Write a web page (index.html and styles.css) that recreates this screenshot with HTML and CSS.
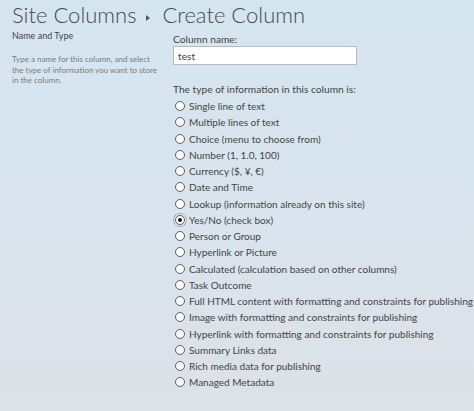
FILE: index.html
```html
<!DOCTYPE html>
<html lang="en">
<head>
<meta charset="utf-8">
<title>Site Columns - Create Column</title>
<link rel="stylesheet" href="styles.css">
</head>
<body>
<div class="page">
  <h1 class="title">Site Columns <span class="crumb-sep"></span> Create Column</h1>
  <div class="section">
    <div class="section-info">
      <div class="section-name">Name and Type</div>
      <p class="section-desc">Type a name for this column, and select the type of information you want to store in the column.</p>
    </div>
    <div class="section-fields">
      <label class="field-label" for="colname">Column name:</label>
      <input class="text-input" id="colname" type="text" value="test">
      <div class="type-label">The type of information in this column is:</div>
      <ul class="type-list">
        <li class="type-item"><span class="radio"></span>Single line of text</li>
        <li class="type-item"><span class="radio"></span>Multiple lines of text</li>
        <li class="type-item"><span class="radio"></span>Choice (menu to choose from)</li>
        <li class="type-item"><span class="radio"></span>Number (1, 1.0, 100)</li>
        <li class="type-item"><span class="radio"></span>Currency ($, ¥, €)</li>
        <li class="type-item"><span class="radio"></span>Date and Time</li>
        <li class="type-item"><span class="radio"></span>Lookup (information already on this site)</li>
        <li class="type-item"><span class="radio checked"></span>Yes/No (check box)</li>
        <li class="type-item"><span class="radio"></span>Person or Group</li>
        <li class="type-item"><span class="radio"></span>Hyperlink or Picture</li>
        <li class="type-item"><span class="radio"></span>Calculated (calculation based on other columns)</li>
        <li class="type-item"><span class="radio"></span>Task Outcome</li>
        <li class="type-item"><span class="radio"></span>Full HTML content with formatting and constraints for publishing</li>
        <li class="type-item"><span class="radio"></span>Image with formatting and constraints for publishing</li>
        <li class="type-item"><span class="radio"></span>Hyperlink with formatting and constraints for publishing</li>
        <li class="type-item"><span class="radio"></span>Summary Links data</li>
        <li class="type-item"><span class="radio"></span>Rich media data for publishing</li>
        <li class="type-item"><span class="radio"></span>Managed Metadata</li>
      </ul>
    </div>
  </div>
</div>
</body>
</html>
```

FILE: styles.css
```css
html, body {
  margin: 0;
  height: 100%;
}

body {
  background: linear-gradient(to bottom, #d5e5f0 0%, #d9e4ee 50%, #dde1e8 100%);
  font-family: "Lato", "Open Sans", sans-serif;
  color: #444;
  overflow: hidden;
}

.page {
  padding: 0 0 0 12px;
}

.title {
  margin: 0;
  padding-top: 0;
  font-weight: 300;
  font-size: 22px;
  line-height: 30px;
  color: #45494e;
  white-space: nowrap;
}

.crumb-sep {
  display: inline-block;
  width: 0;
  height: 0;
  border-left: 4px solid #555;
  border-top: 3.5px solid transparent;
  border-bottom: 3.5px solid transparent;
  vertical-align: middle;
  margin: 0 6px 0 4px;
}

.section {
  display: grid;
  grid-template-columns: 161px 1fr;
}

.section-name {
  margin-top: 0;
  font-size: 9px;
  line-height: 12px;
  color: #444;
}

.section-desc {
  margin: 12px 0 0;
  font-size: 8px;
  line-height: 10.5px;
  color: #7a7a7a;
  width: 150px;
}

.section-fields {
  padding-top: 2px;
  white-space: nowrap;
}

.field-label {
  display: block;
  font-size: 10.2px;
  line-height: 14px;
  color: #444;
}

.text-input {
  display: block;
  box-sizing: border-box;
  width: 184px;
  height: 19px;
  margin: 0;
  padding: 0 4px;
  border: 1px solid #b8bcc0;
  background: #fff;
  font-family: inherit;
  font-size: 10.2px;
  color: #444;
  outline: none;
}

.type-label {
  margin-top: 17px;
  font-size: 10.2px;
  line-height: 15px;
  color: #444;
}

.type-list {
  list-style: none;
  margin: 1px 0 0;
  padding: 0;
}

.type-item {
  display: flex;
  align-items: center;
  height: 16.25px;
  font-size: 10px;
  color: #444;
}

.radio {
  box-sizing: border-box;
  width: 10px;
  height: 10px;
  margin: 0 4px 0 2px;
  border: 1px solid #5e5e5e;
  border-radius: 50%;
  background: #fcfcfc;
  flex: none;
  position: relative;
}

.radio.checked::after {
  content: "";
  position: absolute;
  left: 2px;
  top: 2px;
  width: 4px;
  height: 4px;
  border-radius: 50%;
  background: #111;
}

.radio.checked {
  outline: 1px dotted #777;
  outline-offset: 1px;
}
```
